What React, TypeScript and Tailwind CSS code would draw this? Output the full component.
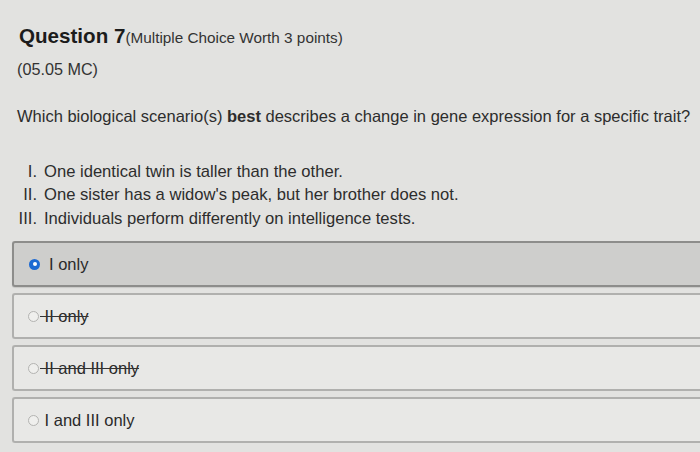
import React from 'react';

const options = [
  { label: 'I only', selected: true, struck: false },
  { label: 'II only', selected: false, struck: true },
  { label: 'II and III only', selected: false, struck: true },
  { label: 'I and III only', selected: false, struck: false },
];

function Radio({ selected }: { selected: boolean }) {
  if (selected) {
    return (
      <span className="w-[11px] h-[11px] rounded-full bg-[#1d6ad2] flex items-center justify-center shrink-0">
        <span className="w-[4px] h-[4px] rounded-full bg-white" />
      </span>
    );
  }
  return <span className="w-[11px] h-[11px] rounded-full border border-[#b3b3b1] bg-[#efefed] shrink-0" />;
}

export default function App() {
  return (
    <div
      className="w-[700px] h-[452px] overflow-hidden bg-[#e2e2e0] text-[#2a2a2a] pt-[21px]"
      style={{ fontFamily: '"Liberation Sans", Arial, sans-serif' }}
    >
      {/* header */}
      <div className="pl-[19px] flex items-baseline">
        <span className="text-[20.6px] font-bold text-[#1c1c1c]">Question 7</span>
        <span className="text-[15.3px] text-[#333]">(Multiple Choice Worth 3 points)</span>
      </div>
      <div className="pl-[17px] mt-[5px] text-[16.2px] text-[#333]">(05.05 MC)</div>

      <p className="pl-[17px] mt-[23px] text-[16.5px] text-[#2d2d2d]">
        Which biological scenario(s) <span className="font-bold">best</span> describes a change in gene expression for a specific trait?
      </p>

      {/* statements */}
      <ol className="mt-[31px] text-[16.6px] text-[#2d2d2d] leading-[23.5px]">
        <li className="flex"><span className="w-[44px] text-right pr-[7px]">I.</span>One identical twin is taller than the other.</li>
        <li className="flex"><span className="w-[44px] text-right pr-[7px]">II.</span>One sister has a widow's peak, but her brother does not.</li>
        <li className="flex"><span className="w-[44px] text-right pr-[7px]">III.</span>Individuals perform differently on intelligence tests.</li>
      </ol>

      {/* answer choices */}
      <div className="mt-[11px] pl-[12px] flex flex-col gap-[6px]">
        {options.map((o) => (
          <div
            key={o.label}
            className={
              o.selected
                ? 'h-[46px] flex items-center gap-[9px] pl-[15px] rounded-l-[3px] border-y-2 border-l-2 border-[#8d8d8b] bg-[#cececc] shadow-[0_1px_1px_rgba(0,0,0,0.12)]'
                : 'h-[46px] flex items-center gap-[1px] pl-[14px] rounded-l-[3px] border-y-2 border-l-2 border-[#b0b0ae] bg-[#e8e8e6]'
            }
          >
            <Radio selected={o.selected} />
            <span className={'text-[16.5px] text-[#2a2a2a] ' + (o.struck ? 'line-through decoration-[#333]' : '')}>
              {o.selected ? o.label : '\u00a0' + o.label}
            </span>
          </div>
        ))}
      </div>
    </div>
  );
}
